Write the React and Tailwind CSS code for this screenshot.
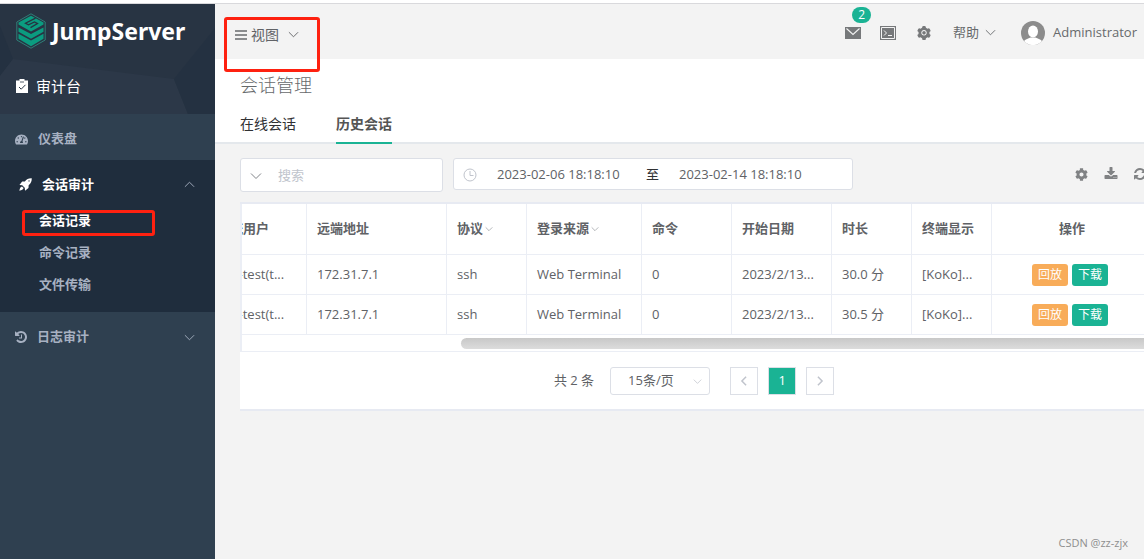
import React from "react";
import { FaTachometerAlt, FaCog } from "react-icons/fa";
import { AiFillSetting } from "react-icons/ai";

function Chevron({ className = "", up = false, width = 1 }) {
  return (
    <svg viewBox="0 0 12 12" className={className} fill="none" stroke="currentColor" strokeWidth={width} aria-hidden="true">
      <path d={up ? "M1 8.5 6 3.5l5 5" : "M1 3.5l5 5 5-5"} />
    </svg>
  );
}

function Logo() {
  return (
    <svg viewBox="0 0 30 36" className="h-9 w-[30px] shrink-0" aria-hidden="true">
      <path d="M15 .8 29.2 9v18L15 35.2.8 27V9z" fill="none" stroke="#2f7f78" strokeWidth="1" />
      <path d="M15 2.8 27.5 9.500v2L15 18.500 2.5 11.500v-2z" fill="#0b9c80" />
      <path d="M19.500 5.200 9.500 10.200l3 1.600 6-2.800 3 1.600-7 4" fill="none" stroke="#263341" strokeWidth="1.300" />
      <path d="M2.5 14.500 15 21l12.500-6.500v4.300L15 25.800 2.5 18.800z" fill="#0b9c80" />
      <path d="M2.500 20.800 15 27.500l12.500-6.700v5L15 33.200 2.500 25.800z" fill="#0b9c80" />
    </svg>
  );
}

function Clipboard() {
  return (
    <svg viewBox="0 0 12 14" className="h-3.5 w-3" aria-hidden="true">
      <path d="M0 1.500h3.500V0h5v1.500H12V14H0z" fill="#fff" />
      <path d="M4 3h4" stroke="#2a3746" strokeWidth=".8" />
      <path d="M3 8l2.200 2.200L9.500 5.800" fill="none" stroke="#2a3746" strokeWidth="1" />
    </svg>
  );
}

function Rocket() {
  return (
    <svg viewBox="0 0 14 14" className="size-[13px]" fill="currentColor" aria-hidden="true">
      <path d="M13.700.3C10.500.1 8.300 1.200 6.300 3.700L3.400 3.900.5 7.600l3 .3 2.700 2.700.3 3 3.700-2.900.2-3C12.900 5.600 13.900 3.500 13.700.3z" />
      <path d="M3.200 9.200C1.600 9.500.8 11 .4 13.600c2.600-.4 4.100-1.200 4.500-2.800z" />
      <circle cx="10.800" cy="3.200" r=".7" fill="#1f2d3d" />
    </svg>
  );
}

function History() {
  return (
    <svg viewBox="128 128 1536 1536" className="size-3" fill="currentColor" aria-hidden="true">
      <path d="M1664 896q0 156-61 298t-164 245-245 164-298 61q-172 0-327-72.500t-264-204.500q-7-10-6.500-22.500t8.500-20.500l137-138q10-9 25-9 16 2 23 12 73 95 179 147t225 52q104 0 198.500-40.500t163.500-109.500 109.500-163.500 40.500-198.500-40.500-198.500-109.500-163.500-163.500-109.500-198.500-40.500q-98 0-188 35.500t-160 101.500l137 138q31 30 14 69-17 40-59 40h-448q-26 0-45-19t-19-45v-448q0-42 40-59 39-17 69 14l130 129q107-101 244.500-156.500t284.500-55.500q156 0 298 61t245 164 164 245 61 298zm-640-288v448q0 14-9 23t-23 9h-320q-14 0-23-9t-9-23v-64q0-14 9-23t23-9h224v-352q0-14 9-23t23-9h64q14 0 23 9t9 23z" />
    </svg>
  );
}

function Download() {
  return (
    <svg viewBox="0 0 1792 1792" className="size-3.5" fill="currentColor" aria-hidden="true">
      <path d="M1344 1344q0-26-19-45t-45-19-45 19-19 45 19 45 45 19 45-19 19-45zm256 0q0-26-19-45t-45-19-45 19-19 45 19 45 45 19 45-19 19-45zm128-224v320q0 40-28 68t-68 28h-1472q-40 0-68-28t-28-68v-320q0-40 28-68t68-28h465l135 136q58 56 136 56t136-56l136-136h464q40 0 68 28t28 68zm-325-569q17 41-14 70l-448 448q-18 19-45 19t-45-19l-448-448q-31-29-14-70 17-39 59-39h256v-448q0-26 19-45t45-19h256q26 0 45 19t19 45v448h256q42 0 59 39z" />
    </svg>
  );
}

function Refresh() {
  return (
    <svg viewBox="128 128 1536 1536" className="size-3" fill="currentColor" aria-hidden="true">
      <path d="M1639 1056q0 5-1 7-64 268-268 434.500t-478 166.500q-146 0-282.500-55t-243.500-157l-129 129q-19 19-45 19t-45-19-19-45v-448q0-26 19-45t45-19h448q26 0 45 19t19 45-19 45l-137 137q71 66 161 102t187 36q134 0 250-65t186-179q11-17 53-117 8-23 30-23h192q13 0 22.500 9.500t9.500 22.500zm25-800v448q0 26-19 45t-45 19h-448q-26 0-45-19t-19-45 19-45l138-138q-148-137-349-137-134 0-250 65t-186 179q-11 17-53 117-8 23-30 23h-199q-13 0-22.500-9.500t-9.500-22.500v-7q65-268 270-434.500t480-166.500q146 0 284 55.500t245 156.500l130-129q19-19 45-19t45 19 19 45z" />
    </svg>
  );
}

function Mail() {
  return (
    <svg viewBox="0 0 16 12" className="h-3 w-4" aria-hidden="true">
      <path d="M0 0h16v12H0z" fill="#76787a" />
      <path d="M1.500 1.500l6.500 6 6.500-6" fill="none" stroke="#f3f3f3" strokeWidth="1.100" />
    </svg>
  );
}

function Terminal() {
  return (
    <svg viewBox="0 0 16 14" className="h-3.5 w-4" aria-hidden="true">
      <path d="M0 0h16v14H0z" fill="#76787a" />
      <path d="M1.500 1.500h13v11h-13z" fill="none" stroke="#f3f3f3" strokeWidth="1" />
      <path d="M4 4.500 6.500 7 4 9.500M8 9.500h4" fill="none" stroke="#f3f3f3" strokeWidth="1" />
    </svg>
  );
}

function Avatar() {
  return (
    <svg viewBox="0 0 24 24" className="size-6" aria-hidden="true">
      <circle cx="12" cy="12" r="12" fill="#8c8c8c" />
      <ellipse cx="12" cy="10.500" rx="5" ry="6" fill="#fff" />
      <path d="M3 20c2-2 4-2.500 6.500-3.500h5C17 17.500 19 18 21 20a12 12 0 0 1-18 0z" fill="#fff" />
    </svg>
  );
}

function Clock() {
  return (
    <svg viewBox="0 0 14 14" className="size-3.5" fill="none" stroke="#c0c4cc" aria-hidden="true">
      <circle cx="7" cy="7" r="6" />
      <path d="M7 3v4.500h3.500" />
    </svg>
  );
}

function Sidebar() {
  return (
    <aside className="w-[215px] shrink-0 bg-[#2f4050] text-[13px] font-semibold text-[#a7b1c2]">
      <div className="relative h-[110px] overflow-hidden bg-[#283443] px-4 pt-[9px]">
        <svg viewBox="0 0 215 110" preserveAspectRatio="none" className="absolute inset-0 size-full" aria-hidden="true">
          <path d="M0 22 13 55 0 72z" fill="#243141" />
          <path d="M13 55 174 75l14 35H0V72z" fill="#2c3848" />
          <path d="M215 24v86h-27l-14-35z" fill="#243141" />
        </svg>
        <div className="relative flex items-center gap-1.5 text-white">
          <Logo />
          <span className="font-['Noto_Sans','Open_Sans',sans-serif] text-[23px] leading-9 font-bold">JumpServer</span>
        </div>
        <div className="relative mt-[25px] flex items-center gap-2 text-[15px] leading-6 font-normal text-white">
          <Clipboard />
          审计台
        </div>
      </div>
      <nav>
        <a href="#dashboard" className="flex h-[46px] items-center gap-2.5 pt-1 pl-[15px]">
          <FaTachometerAlt className="size-[13px]" />
          仪表盘
        </a>
        <div className="bg-[#1f2d3d] pb-[11px]">
          <a href="#audit" className="flex h-[45px] items-center gap-2.5 pt-1 pr-5 pl-[19px] text-white">
            <Rocket />
            <span className="flex-1">会话审计</span>
            <Chevron up className="size-[11px] text-[#a7b1c2]" />
          </a>
          <a href="#records" className="relative flex h-8 items-center pl-[39px] text-white">
            会话记录
            <span className="absolute top-[5px] left-[22px] h-[26px] w-[133px] rounded-[3px] border-3 border-[#fe2110]" />
          </a>
          <a href="#commands" className="flex h-8 items-center pl-[39px]">命令记录</a>
          <a href="#files" className="flex h-8 items-center pl-[39px]">文件传输</a>
        </div>
        <a href="#logs" className="flex h-[46px] items-center gap-2.5 pt-1 pr-5 pl-[15px]">
          <History />
          <span className="flex-1">日志审计</span>
          <Chevron className="size-[11px]" />
        </a>
      </nav>
    </aside>
  );
}

function TopBar() {
  return (
    <header className="flex h-[55px] items-center bg-[#f3f3f3] pt-0.5 pr-[7px] pl-5 text-[13px] text-[#676a6c]">
      <div className="relative pt-1">
        <button type="button" className="flex items-center text-sm text-[#606266]">
          <svg viewBox="0 0 12 10" className="mr-1 h-2.5 w-3" stroke="#8a8c8e" strokeWidth="2" aria-hidden="true">
            <path d="M0 1h12M0 5h12M0 9h12" />
          </svg>
          视图
          <Chevron className="ml-[9px] size-[11px]" />
        </button>
        <span className="pointer-events-none absolute -top-1 -left-[11px] h-[55px] w-24 rounded-[3px] border-3 border-[#fe2110]" />
      </div>
      <div className="ml-auto flex items-center">
        <button type="button" aria-label="消息" className="relative mr-[19px]">
          <Mail />
          <span className="absolute -top-5 left-[7px] h-4 w-[19px] rounded-full bg-[#1ab394] text-center text-xs leading-4 text-white">2</span>
        </button>
        <button type="button" aria-label="终端" className="mr-5"><Terminal /></button>
        <button type="button" aria-label="设置" className="mr-[21px]"><AiFillSetting className="size-4 text-[#76787a]" /></button>
        <button type="button" className="mr-[25px] flex items-center gap-1.5">
          帮助
          <Chevron className="size-[11px]" />
        </button>
        <button type="button" className="flex items-center gap-2">
          <Avatar />
          Administrator
        </button>
      </div>
    </header>
  );
}

const columns = [
  { name: "系统用户", width: "w-[100px]" },
  { name: "远端地址", width: "w-[140px]" },
  { name: "协议", width: "w-20", filter: true },
  { name: "登录来源", width: "w-[115px]", filter: true },
  { name: "命令", width: "w-[90px]" },
  { name: "开始日期", width: "w-[100px]" },
  { name: "时长", width: "w-20" },
  { name: "终端显示", width: "w-20" },
];

const rows = [
  ["jms-test(t...", "172.31.7.1", "ssh", "Web Terminal", "0", "2023/2/13...", "30.0 分", "[KoKo]..."],
  ["jms-test(t...", "172.31.7.1", "ssh", "Web Terminal", "0", "2023/2/13...", "30.5 分", "[KoKo]..."],
];

function SessionTable() {
  return (
    <div className="overflow-hidden border-l-2 border-[#ebeef5]">
      <table className="-ml-[35px] w-[calc(100%+35px)] table-fixed border-separate border-spacing-0 text-left text-[#606266]">
        <thead>
          <tr className="h-[51px]">
            {columns.map((c) => (
              <th key={c.name} className={`${c.width} border-r border-b border-[#ebeef5] px-2.5 font-semibold whitespace-nowrap`}>
                <span className="inline-flex items-center gap-0.5">
                  {c.name}
                  {c.filter && <Chevron className="size-2 text-[#909399]" />}
                </span>
              </th>
            ))}
            <th className="border-b border-[#ebeef5] text-center font-semibold">操作</th>
          </tr>
        </thead>
        <tbody>
          {rows.map((row, i) => (
            <tr key={i} className="h-10">
              {row.map((cell, j) => (
                <td key={j} className="border-r border-b border-[#ebeef5] px-2.5 whitespace-nowrap">{cell}</td>
              ))}
              <td className="border-b border-[#ebeef5] px-2.5">
                <div className="flex justify-center gap-1 pr-1 text-xs text-white">
                  <button type="button" className="h-[22px] w-9 rounded-[3px] bg-[#f8ac59]">回放</button>
                  <button type="button" className="h-[22px] w-9 rounded-[3px] bg-[#1ab394]">下载</button>
                </div>
              </td>
            </tr>
          ))}
        </tbody>
      </table>
      <div className="border-b border-[#ebeef5] pt-[3px] pb-0.5 pl-[219px]">
        <div className="h-[11px] rounded-l-full bg-linear-to-b from-[#c8c8c8] to-[#dcdcdc]" />
      </div>
    </div>
  );
}

function Pagination() {
  return (
    <div className="flex h-[57px] items-center justify-center pr-1 text-[13px] text-[#606266]">
      <span className="mr-4">共 2 条</span>
      <div className="relative mr-5">
        <select aria-label="每页条数" className="h-7 w-[100px] appearance-none rounded-[3px] border border-[#dcdfe6] bg-white pl-[17px] text-[13px]">
          <option>15条/页</option>
        </select>
        <Chevron className="pointer-events-none absolute top-2.5 right-2 size-[9px] text-[#c0c4cc]" />
      </div>
      <div className="flex gap-2.5">
        <button type="button" aria-label="上一页" className="flex size-7 items-center justify-center border border-[#dcdfe6] text-[#c0c4cc]">
          <Chevron width={1.8} className="size-2.5 rotate-90" />
        </button>
        <button type="button" className="size-7 border border-[#dcdfe6] bg-[#1ab394] text-[13px] text-white">1</button>
        <button type="button" aria-label="下一页" className="flex size-7 items-center justify-center border border-[#dcdfe6] text-[#c0c4cc]">
          <Chevron width={1.8} className="size-2.5 -rotate-90" />
        </button>
      </div>
    </div>
  );
}

export default function App() {
  return (
    <div className="relative flex min-h-screen flex-col overflow-hidden bg-white pt-[3px] font-['Open_Sans','Noto_Sans_CJK_SC',sans-serif] text-[13px]">
      <div className="flex grow border-t border-[#d9d9dc] bg-[#f3f3f3]">
        <Sidebar />
        <div className="min-w-0 flex-1">
          <TopBar />
          <section className="border-b-2 border-[#e4e8ec] bg-white px-[25px] pt-3">
            <h1 className="text-lg leading-7 font-light text-[#676a6c]">会话管理</h1>
            <div role="tablist" className="mt-1.5 -mb-0.5 flex gap-10 text-sm text-[#303133]">
              <button type="button" role="tab" aria-selected="false" className="h-[39px] border-b-2 border-transparent">在线会话</button>
              <button type="button" role="tab" aria-selected="true" className="h-[39px] border-b-2 border-[#1ab394] font-semibold text-[#555]">历史会话</button>
            </div>
          </section>
          <main className="-mr-2 pt-3.5 pl-[25px]">
            <div className="flex items-start gap-2.5">
              <div className="flex h-[34px] w-[203px] items-center rounded-[3px] border border-[#dcdfe6] bg-white pt-0.5 pl-[9px]">
                <button type="button" aria-label="筛选"><Chevron className="size-3 text-[#808388]" /></button>
                <input aria-label="搜索" placeholder="搜索" className="ml-4 w-36 outline-none placeholder:text-[#c0c4cc]" />
              </div>
              <div className="flex h-8 w-[400px] items-center rounded-[3px] border border-[#dcdfe6] bg-white pt-0.5 pl-[9px] text-[#606266]">
                <Clock />
                <input aria-label="开始时间" defaultValue="2023-02-06 18:18:10" className="ml-5 w-[149px] outline-none" />
                <span className="w-[33px] text-[#303133]">至</span>
                <input aria-label="结束时间" defaultValue="2023-02-14 18:18:10" className="w-[149px] outline-none" />
              </div>
              <div className="mt-[9px] mr-1.5 ml-auto flex items-center gap-4 text-[13px] text-[#808284]">
                <button type="button" aria-label="设置"><FaCog /></button>
                <button type="button" aria-label="导出"><Download /></button>
                <button type="button" aria-label="刷新"><Refresh /></button>
              </div>
            </div>
            <div className="mt-2.5 border-t-2 border-b-2 border-[#e7eaf2] bg-white">
              <SessionTable />
              <Pagination />
            </div>
          </main>
        </div>
      </div>
      <span className="absolute right-4 bottom-2 text-[11px] leading-4 text-[#8e8e8e]">CSDN @zz-zjx</span>
    </div>
  );
}
